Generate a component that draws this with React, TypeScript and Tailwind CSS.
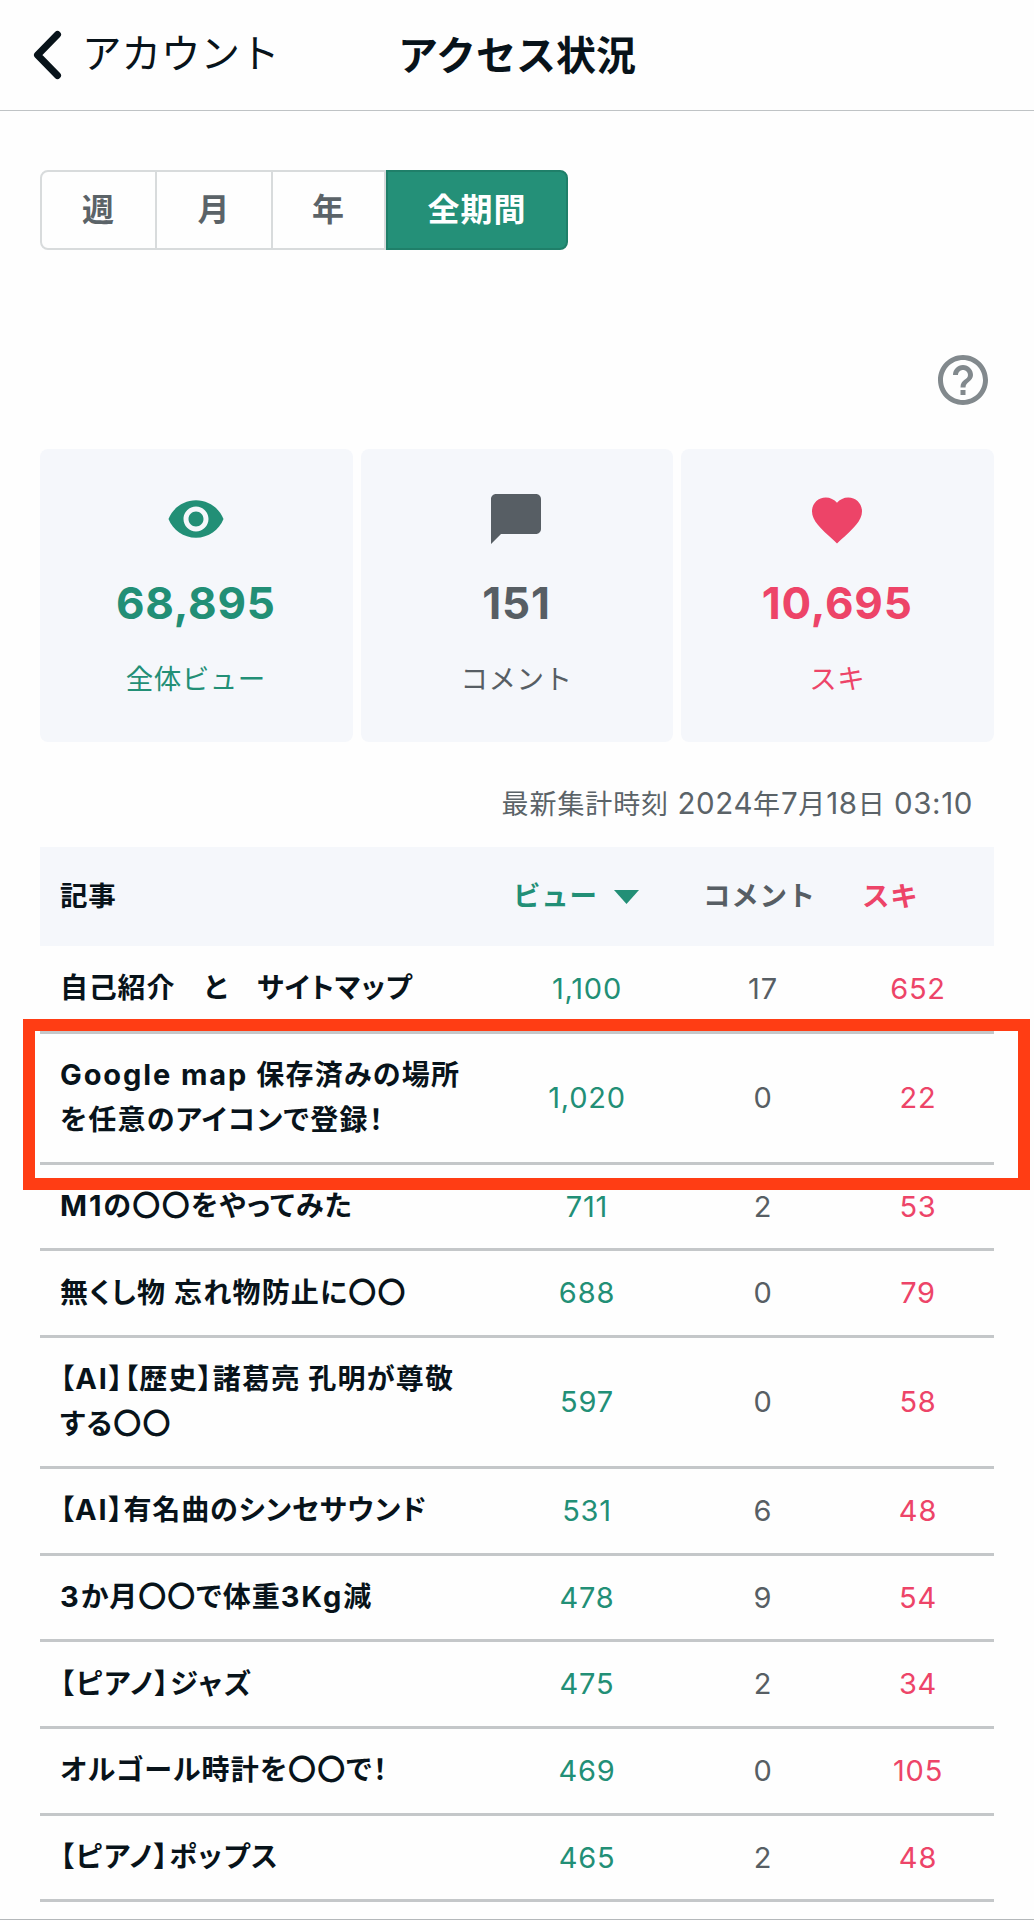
import React, { useState } from 'react';
import { MdChatBubble, MdFavorite, MdHelpOutline, MdVisibility } from 'react-icons/md';

interface Article {
  title: string[];
  views: string;
  comments: number;
  likes: number;
  titleClass: string;
}

const periods = [
  { label: '週', width: 'w-[117px]' },
  { label: '月', width: 'w-[116px]' },
  { label: '年', width: 'w-[113px]' },
  { label: '全期間', width: 'w-[182px]' }
];

const articles: Article[] = [
  { title: ['自己紹介　と　サイトマップ'], views: '1,100', comments: 17, likes: 652, titleClass: 'tracking-[0.8px]' },
  { title: ['Google map 保存済みの場所', 'を任意のアイコンで登録！'], views: '1,020', comments: 0, likes: 22, titleClass: 'tracking-[1.3px]' },
  { title: ['M1の〇〇をやってみた'], views: '711', comments: 2, likes: 53, titleClass: 'tracking-[1.4px]' },
  { title: ['無くし物 忘れ物防止に〇〇'], views: '688', comments: 0, likes: 79, titleClass: 'tracking-[1.2px]' },
  { title: ['【AI】【歴史】諸葛亮 孔明が尊敬', 'する〇〇'], views: '597', comments: 0, likes: 58, titleClass: 'tracking-[1.2px]' },
  { title: ['【AI】有名曲のシンセサウンド'], views: '531', comments: 6, likes: 48, titleClass: 'tracking-[0.9px]' },
  { title: ['3か月〇〇で体重3Kg減'], views: '478', comments: 9, likes: 54, titleClass: 'tracking-[1px]' },
  { title: ['【ピアノ】ジャズ'], views: '475', comments: 2, likes: 34, titleClass: 'tracking-[1.9px]' },
  { title: ['オルゴール時計を〇〇で！'], views: '469', comments: 0, likes: 105, titleClass: 'tracking-[1.2px]' },
  { title: ['【ピアノ】ポップス'], views: '465', comments: 2, likes: 48, titleClass: 'tracking-[1.7px]' }
];

// Latin letters and digits are set slightly larger than the Japanese around them
const MixedText: React.FC<{ text: string; latinClass: string }> = ({ text, latinClass }) => (
  <>
    {text.split(/([A-Za-z0-9:]+(?: [A-Za-z0-9:]+)*)/).map((part, i) =>
      i % 2 === 1 ? (
        <span key={i} className={latinClass}>{part}</span>
      ) : (
        part
      )
    )}
  </>
);

interface StatCardProps {
  icon: React.ReactNode;
  value: string;
  label: string;
  color: string;
}

const StatCard: React.FC<StatCardProps> = ({ icon, value, label, color }) => (
  <div className={`flex flex-col items-center h-[293px] pt-10 pr-px rounded-lg bg-[#f5f7fb] ${color}`}>
    {icon}
    <p className="mt-[27px] text-[44px] leading-[54px] font-bold tracking-[0.8px]">{value}</p>
    <p className="mt-[29px] text-[27.5px] leading-[40px] tracking-[0.5px] [font-feature-settings:normal]">{label}</p>
  </div>
);

const ArticleRow: React.FC<{ article: Article }> = ({ article }) => (
  <div
    className={`grid grid-cols-[460px_174px_178px_132px] items-center border-b-[3px] border-[#c4c7c9] ${
      article.title.length > 1 ? 'h-[131.2px]' : 'h-[86.6px]'
    }`}
  >
    <div className={`pl-[20px] text-[28px] leading-[45px] font-bold whitespace-nowrap ${article.titleClass}`}>
      {article.title.map(line => (
        <p key={line} className="h-[45px]">
          <MixedText text={line} latinClass="text-[29px] leading-none tracking-[1.9px]" />
        </p>
      ))}
    </div>
    <span className="text-center text-[#228f76]">{article.views}</span>
    <span className="text-center text-[#575e64]">{article.comments}</span>
    <span className="text-center text-[#ed4468]">{article.likes}</span>
  </div>
);

const App: React.FC = () => {
  const [period, setPeriod] = useState('全期間');

  return (
    <div
      lang="ja"
      className="relative flex flex-col w-[1034px] h-[1920px] overflow-hidden border-b border-[#b4b8ba] bg-[#fefefe] text-[#08131a] font-['Inter','Noto_Sans_CJK_JP',sans-serif] [font-feature-settings:'palt']"
    >
      <header className="grid grid-cols-[1fr_auto_1fr] items-center h-[111px] shrink-0 px-[32px] border-b border-[#bfc3c5] [font-feature-settings:normal]">
        <button type="button" className="flex items-center gap-[20px] text-[39.5px]">
          <svg width="30" height="50" viewBox="0 0 30 50" fill="none" stroke="currentColor" strokeWidth="7" strokeLinecap="round" strokeLinejoin="round">
            <path d="M25.5 4.5 5.5 25l20 20.5" />
          </svg>
          <span>アカウント</span>
        </button>
        <h1 className="pt-px text-[40px] font-bold">アクセス状況</h1>
      </header>

      <main className="px-10">
        <div className="flex w-[528px] h-[80px] mt-[59px] text-[32px] font-bold tracking-[1px]">
          {periods.map(({ label, width }) => (
            <button
              key={label}
              type="button"
              onClick={() => setPeriod(label)}
              className={`${width} border-y-2 first:border-l-2 first:rounded-l-lg last:rounded-r-lg ${
                period === label
                  ? 'border-x-2 border-[#1f7f69] bg-[#249078] text-white'
                  : 'border-r-2 border-[#d8dbdc] text-[#5b6368]'
              }`}
            >
              {label}
            </button>
          ))}
        </div>

        <div className="flex justify-end mt-[100px] pr-[1px] text-[#82898d]">
          <MdHelpOutline size={60} />
        </div>

        <section className="grid grid-cols-3 gap-2 mt-[39px]">
          <StatCard icon={<MdVisibility size={60} />} value="68,895" label="全体ビュー" color="text-[#228f76]" />
          <StatCard icon={<MdChatBubble size={60} />} value="151" label="コメント" color="text-[#575e64]" />
          <StatCard icon={<MdFavorite size={60} className="translate-y-px" />} value="10,695" label="スキ" color="text-[#ed4468]" />
        </section>

        <p className="h-[40px] mt-[43px] pr-[21px] text-right text-[27px] leading-[40px] tracking-[0.9px] text-[#5b6368]">
          <MixedText text="最新集計時刻 2024年7月18日 03:10" latinClass="text-[29.5px] leading-none tracking-[0.6px]" />
        </p>

        <section className="mt-[22px] text-[29px] tracking-[0.8px]">
          <div className="grid grid-cols-[460px_174px_178px_132px] items-center h-[99px] mb-[1px] bg-[#f5f7fb] text-[27.5px] font-bold tracking-[0.7px] [font-feature-settings:normal]">
            <span className="pl-[20px]">記事</span>
            <span className="flex items-center gap-[16px] pl-[13px] text-[#228f76]">
              ビュー
              <svg width="25" height="14" viewBox="0 0 25 14" fill="currentColor">
                <path d="M0 0h25L12.5 14z" />
              </svg>
            </span>
            <span className="pl-[29px] text-[#575e64]">コメント</span>
            <span className="pl-[10px] text-[#ed4468]">スキ</span>
          </div>
          {articles.map(article => (
            <ArticleRow key={article.title[0]} article={article} />
          ))}
        </section>
      </main>

      {/* Highlight frame over the selected article */}
      <div className="absolute left-[23px] top-[1019px] w-[1007px] h-[171px] border-[12px] border-[#ff3d14] pointer-events-none" />
    </div>
  );
};

export default App;
